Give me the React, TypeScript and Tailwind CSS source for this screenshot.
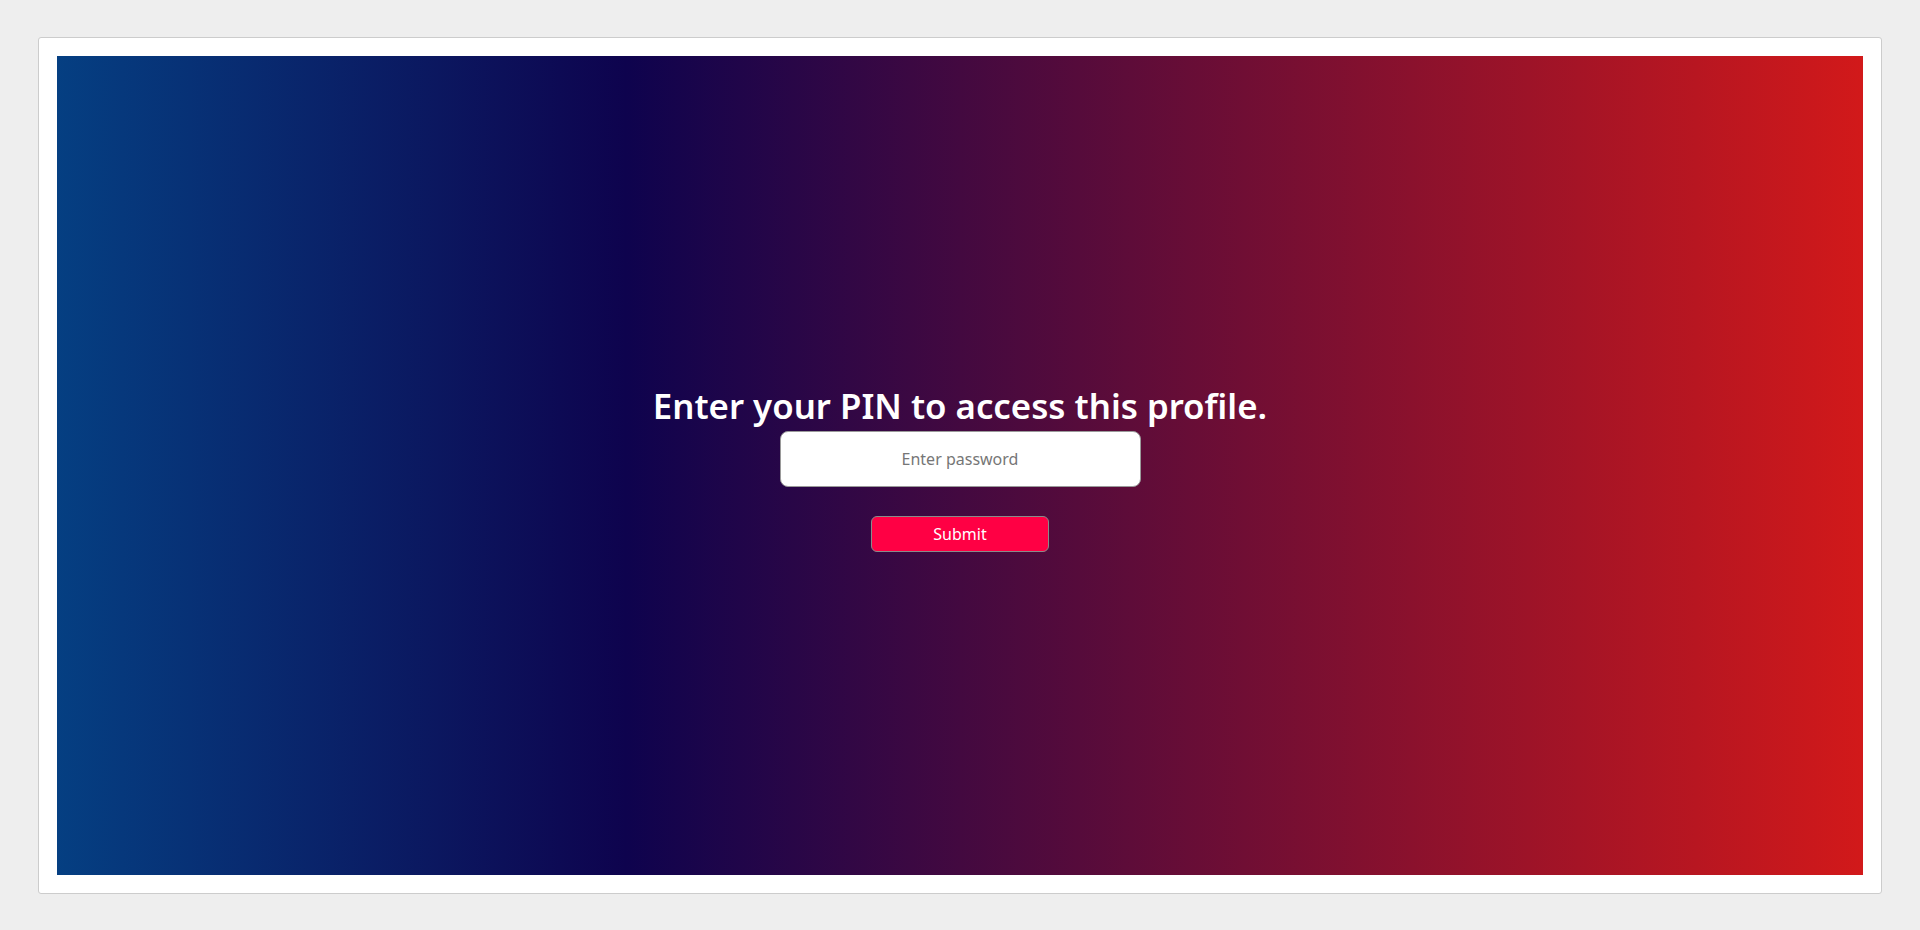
import { useState } from "react";

export default function App() {
  const [pin, setPin] = useState("");

  return (
    <div className="min-h-screen bg-[#eeeeee] px-[38px] pt-[37px] pb-[36px] font-['Noto_Sans',sans-serif]">
      <div className="h-[857px] rounded-[3px] border border-[#cccccc] bg-white p-[18px]">
        <div className="flex h-full flex-col items-center justify-center pt-[3px] bg-[linear-gradient(to_right,#053f82,#0e034e_31.5%,#d2191a)]">
          <h1 className="text-[34.8px] leading-[46px] font-semibold text-white">
            Enter your PIN to access this profile.
          </h1>
          <input
            type="password"
            value={pin}
            onChange={(e) => setPin(e.target.value)}
            placeholder="Enter password"
            className="mt-[2px] h-[56px] w-[361px] rounded-lg border border-[#9a9a9a] bg-white text-center text-base text-gray-800 placeholder:text-[#767676] outline-none"
          />
          <button className="mt-[29px] h-[36px] w-[178px] rounded-md border border-[#8a8a8a] bg-[#ff0044] text-base text-white">
            Submit
          </button>
        </div>
      </div>
    </div>
  );
}
